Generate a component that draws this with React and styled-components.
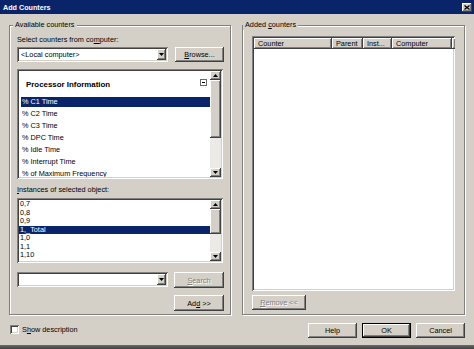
import React from "react";
import styled, { createGlobalStyle, css } from "styled-components";

const FACE = "#d4d0c8";
const NAVY = "#0a246a";

const GlobalStyle = createGlobalStyle`
  html, body { margin: 0; padding: 0; background: ${FACE}; }
  body { font-family: "Liberation Sans", Arial, sans-serif; font-size: 7.3px; color: #000; }
  * { box-sizing: border-box; }
  u { text-decoration-thickness: 1px; text-underline-offset: 1px; }
`;

const raised = css`
  background: ${FACE};
  box-shadow: inset -1px -1px 0 #404040, inset 1px 1px 0 #fff,
    inset -2px -2px 0 #808080, inset 2px 2px 0 ${FACE};
`;

const sunken = css`
  box-shadow: inset 1px 1px 0 #808080, inset -1px -1px 0 #fff,
    inset 2px 2px 0 #404040, inset -2px -2px 0 ${FACE};
`;

const Window = styled.div`
  width: 474px;
  height: 349px;
  background: ${FACE};
  display: flex;
  flex-direction: column;
  overflow: hidden;
`;

const TitleBar = styled.div`
  height: 14px;
  flex: none;
  background: ${NAVY};
  color: #fff;
  font-weight: bold;
  font-size: 7.2px;
  display: flex;
  align-items: center;
  justify-content: space-between;
  padding: 0 2px 0 3px;
`;

const CloseBtn = styled.div`
  ${raised};
  width: 10px;
  height: 9px;
  display: flex;
  align-items: center;
  justify-content: center;
`;

const Body = styled.div`
  flex: 1;
  display: flex;
  flex-direction: column;
  padding: 6px 9px 0 9px;
`;

const Groups = styled.div`
  display: flex;
  gap: 11px;
  height: 295px;
`;

const Group = styled.fieldset`
  margin: 0;
  min-width: 0;
  width: ${(p) => p.$w}px;
  height: 100%;
  padding: 0 ${(p) => p.$pr}px 0 ${(p) => p.$pl}px;
  border: 1px solid #808080;
  box-shadow: inset 1px 1px 0 #fff, 1px 1px 0 #fff;
  display: flex;
  flex-direction: column;
`;

const Legend = styled.legend`
  padding: 0 2px;
  margin-left: ${(p) => p.$ml}px;
  line-height: 10px;
  background: ${FACE};
`;

const FieldLabel = styled.div`
  margin-top: ${(p) => p.$mt}px;
  line-height: 10px;
  height: 10px;
`;

const ControlRow = styled.div`
  margin-top: ${(p) => p.$mt}px;
  display: flex;
  align-items: flex-start;
  gap: ${(p) => p.$gap}px;
`;

const Combo = styled.div`
  ${sunken};
  background: #fff;
  flex: 1;
  height: 15px;
  padding: 2px;
  display: flex;
  align-items: center;
`;

const ComboText = styled.div`
  flex: 1;
  padding-left: 2px;
  line-height: 11px;
`;

const DropBtn = styled.div`
  ${raised};
  width: 9px;
  height: 11px;
  display: flex;
  align-items: center;
  justify-content: center;
`;

const Button = styled.div`
  ${raised};
  width: ${(p) => p.$w}px;
  height: ${(p) => p.$h || 15}px;
  flex: none;
  display: flex;
  align-items: center;
  justify-content: center;
  color: ${(p) => (p.$disabled ? "#808080" : "#000")};
  text-shadow: ${(p) => (p.$disabled ? "1px 1px 0 #fff" : "none")};
  align-self: ${(p) => p.$align || "auto"};
  margin-top: ${(p) => p.$mt || 0}px;
`;

const DefaultButton = styled(Button)`
  box-shadow: inset 0 0 0 1px #000, inset -2px -2px 0 #404040,
    inset 2px 2px 0 #fff, inset -3px -3px 0 #808080;
`;

const ListBox = styled.div`
  ${sunken};
  background: #fff;
  margin-top: ${(p) => p.$mt}px;
  width: ${(p) => p.$w}px;
  height: ${(p) => p.$h}px;
  padding: 2px;
  display: flex;
  overflow: hidden;
`;

const ListContent = styled.div`
  flex: 1;
  min-width: 0;
  display: flex;
  flex-direction: column;
  overflow: hidden;
`;

const CategoryHeader = styled.div`
  height: 26px;
  flex: none;
  display: flex;
  align-items: center;
  justify-content: space-between;
  padding: 0 3px 0 7px;
  font-weight: bold;
  font-size: 7.9px;
`;

const MinusBox = styled.div`
  width: 7px;
  height: 7px;
  border: 1px solid #6a6a6a;
  display: flex;
  align-items: center;
  justify-content: center;
  margin-top: -3px;
  &::after {
    content: "";
    width: 3px;
    height: 1px;
    background: #000;
  }
`;

const CounterRow = styled.div`
  flex: none;
  height: 10px;
  margin: 0 0 2px 2px;
  padding-left: 1px;
  line-height: 10px;
  white-space: nowrap;
  background: ${(p) => (p.$sel ? NAVY : "transparent")};
  color: ${(p) => (p.$sel ? "#fff" : "#000")};
`;

const InstanceRow = styled.div`
  flex: none;
  height: 8.5px;
  line-height: 8.5px;
  padding-left: 1px;
  white-space: nowrap;
  background: ${(p) => (p.$sel ? NAVY : "transparent")};
  color: ${(p) => (p.$sel ? "#fff" : "#000")};
`;

const Scroll = styled.div`
  width: 11px;
  flex: none;
  display: flex;
  flex-direction: column;
  background: #eceae6;
`;

const ScrollArrow = styled.div`
  ${raised};
  height: ${(p) => p.$h}px;
  flex: none;
  display: flex;
  align-items: center;
  justify-content: center;
`;

const Track = styled.div`
  flex: 1;
  display: flex;
  flex-direction: column;
`;

const TrackGap = styled.div`
  height: ${(p) => p.$h}px;
  flex: none;
`;

const Thumb = styled.div`
  ${raised};
  height: ${(p) => p.$h}px;
  flex: none;
`;

const ListView = styled(ListBox)`
  flex-direction: column;
`;

const HeaderRow = styled.div`
  display: flex;
  height: 11px;
  flex: none;
`;

const HeaderCell = styled.div`
  ${raised};
  width: ${(p) => p.$w}px;
  flex: ${(p) => (p.$w ? "none" : "1")};
  padding-left: 4px;
  line-height: 11px;
  white-space: nowrap;
  overflow: hidden;
`;

const BottomRow = styled.div`
  margin-top: 8px;
  display: flex;
  align-items: center;
  height: 15px;
`;

const CheckLabel = styled.label`
  display: flex;
  align-items: center;
  gap: 3px;
  padding-left: 1px;
  flex: 1;
  margin-top: -2px;
`;

const CheckBox = styled.span`
  ${sunken};
  background: #fff;
  width: 9px;
  height: 9px;
  display: inline-block;
`;

const ButtonGroup = styled.div`
  display: flex;
  gap: 5px;
`;

const BottomEdge = styled.div`
  margin-top: auto;
  height: 4px;
  flex: none;
  background: linear-gradient(#6a6a6a, #404040);
`;

const Tri = ({ up }) => (
  <svg width="5" height="3" viewBox="0 0 5 3">
    <path d={up ? "M2.5 0 L5 3 L0 3Z" : "M0 0 L5 0 L2.5 3Z"} fill="#000" />
  </svg>
);

const ScrollBar = ({ arrowH, gap, thumb }) => (
  <Scroll>
    <ScrollArrow $h={arrowH}>
      <Tri up />
    </ScrollArrow>
    <Track>
      <TrackGap $h={gap} />
      <Thumb $h={thumb} />
    </Track>
    <ScrollArrow $h={arrowH}>
      <Tri />
    </ScrollArrow>
  </Scroll>
);

const counters = [
  "% C1 Time",
  "% C2 Time",
  "% C3 Time",
  "% DPC Time",
  "% Idle Time",
  "% Interrupt Time",
  "% of Maximum Frequency",
];

const instances = ["0,7", "0,8", "0,9", "1,_Total", "1,0", "1,1", "1,10", "1,11"];

export default function App() {
  return (
    <>
      <GlobalStyle />
      <Window>
        <TitleBar>
          <span>Add Counters</span>
          <CloseBtn>
            <svg width="6" height="5" viewBox="0 0 6 5">
              <path d="M0.5 0.5 L5.5 4.5 M5.5 0.5 L0.5 4.5" stroke="#000" strokeWidth="1.3" />
            </svg>
          </CloseBtn>
        </TitleBar>
        <Body>
          <Groups>
            <Group $w={222} $pl={7} $pr={6}>
              <Legend $ml={-4}>Available counters</Legend>
              <FieldLabel $mt={5}>
                Select counters from co<u>m</u>puter:
              </FieldLabel>
              <ControlRow $mt={2} $gap={7}>
                <Combo>
                  <ComboText>&lt;Local computer&gt;</ComboText>
                  <DropBtn>
                    <Tri />
                  </DropBtn>
                </Combo>
                <Button $w={49}>
                  <span>
                    <u>B</u>rowse...
                  </span>
                </Button>
              </ControlRow>
              <ListBox $mt={7} $w={206} $h={110}>
                <ListContent>
                  <CategoryHeader>
                    <span>Processor Information</span>
                    <MinusBox />
                  </CategoryHeader>
                  {counters.map((c, i) => (
                    <CounterRow key={c} $sel={i === 0}>
                      {c}
                    </CounterRow>
                  ))}
                </ListContent>
                <ScrollBar arrowH={9} gap={0} thumb={58} />
              </ListBox>
              <FieldLabel $mt={6}>
                <u>I</u>nstances of selected object:
              </FieldLabel>
              <ListBox $mt={3} $w={206} $h={65}>
                <ListContent>
                  {instances.map((c, i) => (
                    <InstanceRow key={c} $sel={i === 3}>
                      {c}
                    </InstanceRow>
                  ))}
                </ListContent>
                <ScrollBar arrowH={9} gap={0} thumb={25} />
              </ListBox>
              <ControlRow $mt={9} $gap={6}>
                <Combo>
                  <ComboText />
                  <DropBtn>
                    <Tri />
                  </DropBtn>
                </Combo>
                <Button $w={50} $h={16} $disabled>
                  <span>
                    <u>S</u>earch
                  </span>
                </Button>
              </ControlRow>
              <Button $w={50} $h={16} $mt={7} $align="flex-end">
                <span>
                  Ad<u>d</u> &gt;&gt;
                </span>
              </Button>
            </Group>
            <Group $w={223} $pl={9} $pr={9}>
              <Legend $ml={-9}>
                Added <u>c</u>ounters
              </Legend>
              <ListView $mt={6} $w={203} $h={255}>
                <HeaderRow>
                  <HeaderCell $w={78}>Counter</HeaderCell>
                  <HeaderCell $w={31}>Parent</HeaderCell>
                  <HeaderCell $w={29}>Inst...</HeaderCell>
                  <HeaderCell $w={60}>Computer</HeaderCell>
                  <HeaderCell />
                </HeaderRow>
              </ListView>
              <Button $w={54} $mt={4} $disabled>
                <span>
                  <u>R</u>emove &lt;&lt;
                </span>
              </Button>
            </Group>
          </Groups>
          <BottomRow>
            <CheckLabel>
              <CheckBox />
              <span>
                S<u>h</u>ow description
              </span>
            </CheckLabel>
            <ButtonGroup>
              <Button $w={49}>Help</Button>
              <DefaultButton $w={49}>OK</DefaultButton>
              <Button $w={49}>Cancel</Button>
            </ButtonGroup>
          </BottomRow>
        </Body>
        <BottomEdge />
      </Window>
    </>
  );
}
